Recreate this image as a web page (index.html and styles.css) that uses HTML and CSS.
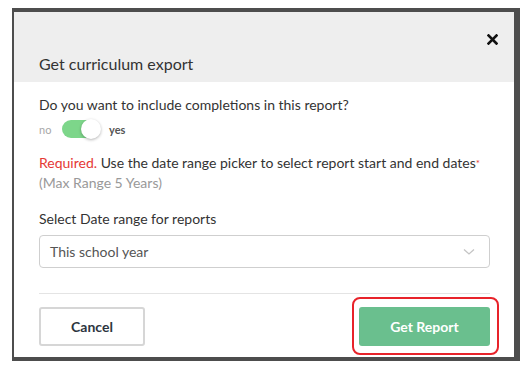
FILE: index.html
```html
<!DOCTYPE html>
<html lang="en">
<head>
    <meta charset="UTF-8">
    <meta name="viewport" content="width=device-width, initial-scale=1.0">
    <title>Get curriculum export</title>
    <link rel="stylesheet" href="styles.css">
</head>
<body>
    <div class="backdrop">
        <div class="modal">
            <div class="modal-header">
                <div class="close-row">
                    <button class="close-btn" type="button" aria-label="Close">
                        <svg width="11" height="11" viewBox="0 0 11 11">
                            <path d="M1.5 1.5 L9.5 9.5 M9.5 1.5 L1.5 9.5" stroke="#111" stroke-width="2.6" stroke-linecap="square"/>
                        </svg>
                    </button>
                </div>
                <h2 class="modal-title">Get curriculum export</h2>
            </div>

            <div class="modal-body">
                <p class="question">Do you want to include completions in this report?</p>
                <div class="toggle-row">
                    <span class="toggle-off">no</span>
                    <span class="toggle on"><span class="knob"></span></span>
                    <span class="toggle-on">yes</span>
                </div>

                <p class="hint"><span class="required">Required.</span> Use the date range picker to select report start and end dates<span class="star">*</span></p>
                <p class="sub-hint">(Max Range 5 Years)</p>

                <label class="field-label" for="range">Select Date range for reports</label>
                <div class="select">
                    <span>This school year</span>
                    <svg width="12" height="8" viewBox="0 0 12 8">
                        <path d="M1 1.5 L6 6 L11 1.5" fill="none" stroke="#c4c4c4" stroke-width="1.3"/>
                    </svg>
                </div>
            </div>

            <div class="modal-footer">
                <button class="btn btn-cancel" type="button">Cancel</button>
                <div class="highlight">
                    <button class="btn btn-primary" type="button">Get Report</button>
                </div>
            </div>
        </div>
    </div>
</body>
</html>
```

FILE: styles.css
```css
body {
    margin: 0;
    background: #fff;
    font-family: Lato, 'Noto Sans', sans-serif;
    color: #3a3a3a;
}
.backdrop {
    margin: 8px 0 0 12px;
    width: 500px;
    padding: 4px 6px 4px 2px;
    background: #4d4d4d;
}
.modal {
    background: #fff;
}
.modal-header {
    background: #eeeeee;
    padding: 17px 14px 8px 25px;
}
.close-row {
    display: flex;
    justify-content: flex-end;
    height: 20px;
}
.close-btn {
    background: none;
    border: none;
    padding: 0 2px;
    display: flex;
    align-items: center;
}
.modal-title {
    margin: 5px 0 0;
    font-size: 16px;
    font-weight: 400;
    line-height: 20px;
    color: #333;
}
.modal-body {
    padding: 14px 24px 0 25px;
}
.question {
    margin: 0;
    font-size: 14px;
    line-height: 18px;
    color: #333;
}
.toggle-row {
    display: flex;
    align-items: center;
    gap: 9px;
    margin-top: 5px;
    height: 20px;
}
.toggle-off {
    font-size: 11px;
    color: #a8a8a8;
    width: 14px;
}
.toggle {
    position: relative;
    width: 38px;
    height: 18px;
    border-radius: 9px;
    background: #7dd68a;
}
.toggle .knob {
    position: absolute;
    right: -1px;
    top: -1px;
    width: 20px;
    height: 20px;
    border-radius: 50%;
    background: #fff;
    box-shadow: 0 1px 3px rgba(0, 0, 0, 0.3);
}
.toggle-on {
    font-size: 11px;
    font-weight: 700;
    color: #555;
}
.hint {
    margin: 15px 0 0;
    font-size: 14px;
    line-height: 18px;
    color: #333;
}
.required {
    color: #e53935;
}
.star {
    color: #e53935;
    font-size: 10px;
    vertical-align: top;
}
.sub-hint {
    margin: 2px 0 0;
    font-size: 14px;
    line-height: 18px;
    color: #999;
}
.field-label {
    display: block;
    margin-top: 18px;
    font-size: 14px;
    line-height: 18px;
    color: #333;
}
.select {
    margin-top: 7px;
    height: 31px;
    border: 1px solid #cfcfcf;
    border-radius: 4px;
    display: flex;
    align-items: center;
    justify-content: space-between;
    padding: 0 14px 0 10px;
    font-size: 14px;
    color: #555;
}
.modal-footer {
    margin: 25px 24px 0 25px;
    border-top: 1px solid #e4e4e4;
    padding: 13px 0 11px;
    display: flex;
    justify-content: space-between;
    align-items: center;
}
.btn {
    font-family: Lato, 'Noto Sans', sans-serif;
    font-size: 14px;
    font-weight: 700;
    border-radius: 3px;
    height: 39px;
    cursor: pointer;
}
.btn-cancel {
    width: 106px;
    background: #fff;
    border: 2px solid #d6d6d6;
    color: #2d3540;
}
.highlight {
    position: relative;
}
.highlight::after {
    content: "";
    position: absolute;
    left: -7px;
    right: -9px;
    top: -10px;
    bottom: -9px;
    border: 2px solid #e8232a;
    border-radius: 8px;
}
.btn-primary {
    width: 131px;
    background: #6abf8e;
    border: none;
    color: #fff;
}
```
